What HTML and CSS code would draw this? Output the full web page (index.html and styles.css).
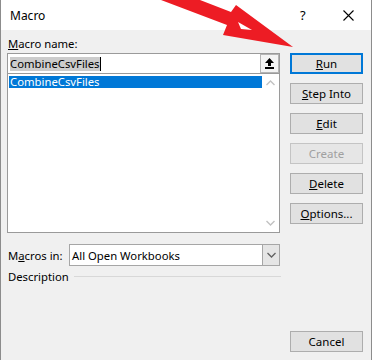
FILE: index.html
```html
<!DOCTYPE html>
<html lang="en">
<head>
    <meta charset="UTF-8">
    <title>Macro</title>
    <link rel="stylesheet" href="styles.css">
</head>
<body>
    <div class="window">
        <div class="titlebar">
            <span class="title">Macro</span>
            <span class="help">?</span>
            <span class="close">
                <svg width="11" height="11" viewBox="0 0 11 11"><path d="M0.5 0.5L10.5 10.5M10.5 0.5L0.5 10.5" stroke="#000" stroke-width="1.1"/></svg>
            </span>
        </div>

        <div class="dialog">
            <div class="left">
                <div class="label"><u>M</u>acro name:</div>
                <div class="name-box">
                    <span class="name-text"><span class="selected">CombineCsvFiles</span><span class="caret"></span></span>
                    <span class="upload">
                        <svg width="9" height="11" viewBox="0 0 9 11"><path d="M4.5 0L9 5H6V8H3V5H0Z" fill="#000"/><rect x="0" y="9" width="9" height="2" fill="#000"/></svg>
                    </span>
                </div>
                <div class="list">
                    <div class="items">
                        <div class="item active">CombineCsvFiles</div>
                    </div>
                    <div class="scroll">
                        <svg width="9" height="6" viewBox="0 0 9 6"><path d="M0.5 5L4.5 1L8.5 5" fill="none" stroke="#c2c2c2" stroke-width="1.4"/></svg>
                        <svg width="9" height="6" viewBox="0 0 9 6"><path d="M0.5 1L4.5 5L8.5 1" fill="none" stroke="#c2c2c2" stroke-width="1.4"/></svg>
                    </div>
                </div>
                <div class="macros-in">
                    <span class="row-label">M<u>a</u>cros in:</span>
                    <div class="select">
                        <span class="select-text">All Open Workbooks</span>
                        <span class="drop">
                            <svg width="9" height="6" viewBox="0 0 9 6"><path d="M0.5 1L4.5 5L8.5 1" fill="none" stroke="#606060" stroke-width="1.3"/></svg>
                        </span>
                    </div>
                </div>
                <div class="description">
                    <span>Description</span>
                    <span class="rule"></span>
                </div>
            </div>

            <div class="right">
                <button class="btn default"><u>R</u>un</button>
                <button class="btn"><u>S</u>tep Into</button>
                <button class="btn"><u>E</u>dit</button>
                <button class="btn disabled">Create</button>
                <button class="btn"><u>D</u>elete</button>
                <button class="btn"><u>O</u>ptions...</button>
                <button class="btn cancel">Cancel</button>
            </div>
        </div>

        <!-- flecha roja encima del dialogo -->
        <svg class="arrow" width="372" height="60" viewBox="0 0 372 60">
            <polygon points="160,0 199,0 230,12 235,5 292,47 222,35 226,25" fill="#ed1c24"/>
            <polygon points="237,22 251,30 240,29" fill="#fff"/>
        </svg>
    </div>
</body>
</html>
```

FILE: styles.css
```css
* {
    box-sizing: border-box;
}
body {
    margin: 0;
    font-family: "Noto Sans", "Open Sans", sans-serif;
    font-size: 11.3px;
    color: #000;
}
u {
    text-decoration: underline;
    text-underline-offset: 1px;
}
.window {
    position: relative;
    width: 372px;
    height: 360px;
    border-left: 1px solid #8c8c8c;
    border-right: 1px solid #8c8c8c;
    display: flex;
    flex-direction: column;
    overflow: hidden;
}
.titlebar {
    height: 30px;
    background: #fff;
    display: flex;
    align-items: center;
    padding-left: 9px;
}
.title {
    font-size: 12px;
    flex: 1;
}
.help {
    font-size: 13px;
    width: 12px;
    margin-right: 31px;
}
.close {
    display: flex;
    margin-right: 17px;
}
.dialog {
    flex: 1;
    background: #f0f0f0;
    display: flex;
    padding: 0 8px 8px 6px;
}
.left {
    width: 273px;
    display: flex;
    flex-direction: column;
    padding-top: 6px;
}
.label {
    line-height: 16px;
    height: 17px;
    padding-left: 1px;
}
.name-box {
    height: 21px;
    border: 1px solid #9a9a9a;
    background: #fff;
    display: flex;
    align-items: center;
}
.name-text {
    flex: 1;
    display: flex;
    align-items: center;
    padding-left: 2px;
}
.selected {
    background: #cccccc;
    line-height: 14px;
}
.caret {
    width: 1px;
    height: 14px;
    background: #000;
}
.upload {
    width: 19px;
    height: 19px;
    border: 1px solid #b4b4b4;
    background: #f4f4f4;
    display: flex;
    align-items: center;
    justify-content: center;
}
.list {
    height: 160px;
    margin-top: -1px;
    border: 1px solid #9a9a9a;
    background: #fff;
    display: flex;
}
.items {
    flex: 1;
    padding: 2px 0 0 1px;
}
.item {
    height: 12px;
    line-height: 12px;
    padding-left: 1px;
}
.item.active {
    background: #0078d7;
    color: #fff;
}
.scroll {
    width: 17px;
    display: flex;
    flex-direction: column;
    justify-content: space-between;
    align-items: center;
    padding: 6px 0 6px;
}
.macros-in {
    margin-top: 11px;
    display: flex;
    align-items: center;
}
.row-label {
    width: 62px;
    padding-left: 1px;
}
.select {
    flex: 1;
    height: 22px;
    border: 1px solid #a6a6a6;
    background: #fff;
    display: flex;
    align-items: center;
}
.select-text {
    flex: 1;
    padding-left: 2px;
}
.drop {
    width: 17px;
    height: 20px;
    background: #e5e5e5;
    border-left: 1px solid #a6a6a6;
    display: flex;
    align-items: center;
    justify-content: center;
}
.description {
    margin-top: 3px;
    display: flex;
    align-items: center;
    gap: 5px;
    padding-left: 1px;
}
.rule {
    flex: 1;
    height: 1px;
    background: #d8d8d8;
    margin-right: -1px;
}
.right {
    width: 73px;
    margin-left: 10px;
    padding-top: 23px;
    display: flex;
    flex-direction: column;
    gap: 9px;
}
.btn {
    height: 21px;
    border: 1px solid #adadad;
    background: #e1e1e1;
    font-family: inherit;
    font-size: 11.5px;
    color: #000;
    padding: 0;
}
.btn.default {
    border: 2px solid #0078d7;
}
.btn.disabled {
    color: #a0a0a0;
    border-color: #c4c4c4;
    background: #e6e6e6;
}
.btn.cancel {
    margin-top: auto;
}
.arrow {
    position: absolute;
    top: 0;
    left: 0;
}
```
